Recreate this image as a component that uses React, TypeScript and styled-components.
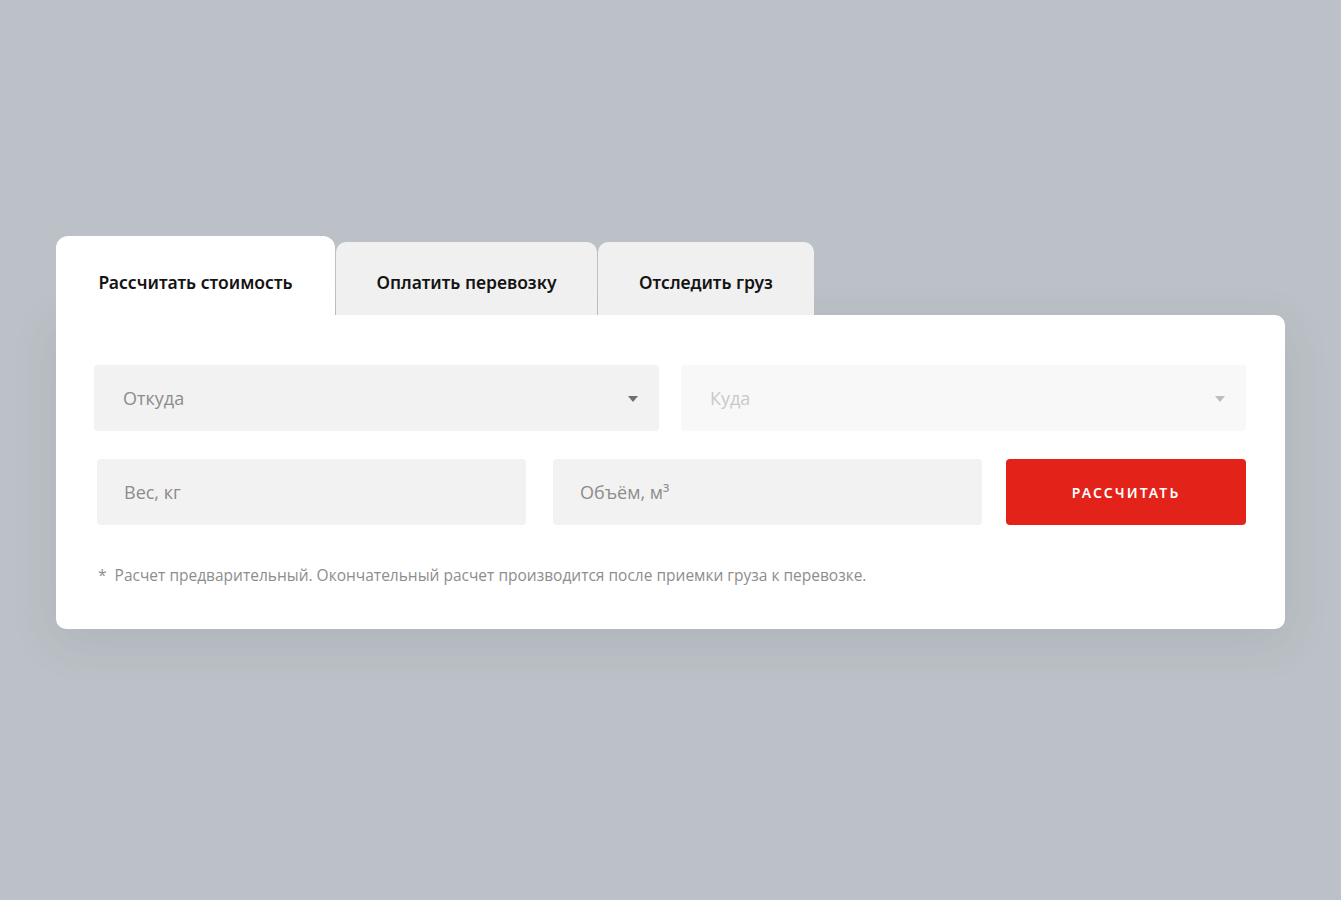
import React, { useState } from 'react';
import styled, { createGlobalStyle } from 'styled-components';

const GlobalStyle = createGlobalStyle`
  html, body {
    margin: 0;
    padding: 0;
    background: #bbc1c6;
  }
  body {
    font-family: "Open Sans", "Noto Sans", sans-serif;
  }
`;

const Page = styled.div`
  min-height: 900px;
  padding: 236px 56px 0 56px;
  box-sizing: border-box;
`;

const Widget = styled.div`
  width: 1229px;
`;

const Tabs = styled.div`
  display: flex;
  align-items: flex-end;
  gap: 1px;
`;

const Tab = styled.button<{ $active?: boolean; $w: number }>`
  border: none;
  margin: 0;
  cursor: pointer;
  font-family: "Noto Sans", "Open Sans", sans-serif;
  font-size: 17.5px;
  font-weight: 600;
  line-height: 20px;
  color: #141414;
  background: ${p => (p.$active ? '#ffffff' : '#f0f0f0')};
  border-radius: ${p => (p.$active ? '12px 12px 0 0' : '10px 10px 0 0')};
  padding: ${p => (p.$active ? '36px 0 23px 0' : '30px 0 23px 0')};
  width: ${p => p.$w}px;
  text-align: center;
`;

const Card = styled.div`
  background: #ffffff;
  border-radius: 0 10px 10px 10px;
  padding: 50px 39px 44px 38px;
  box-shadow: 0 12px 48px rgba(60, 70, 80, 0.1);
`;

const RowTop = styled.div`
  display: grid;
  grid-template-columns: 1fr 1fr;
  gap: 22px;
`;

const RowBottom = styled.div`
  display: flex;
  margin: 28px 0 0 3px;
`;

const Select = styled.div<{ $disabled?: boolean }>`
  height: 66px;
  border-radius: 4px;
  background: ${p => (p.$disabled ? '#f8f8f8' : '#f2f2f2')};
  display: flex;
  align-items: center;
  justify-content: space-between;
  padding: 0 21px 0 29px;
  font-size: 18px;
  color: ${p => (p.$disabled ? '#c9c9c9' : '#8c8c8c')};
`;

const Arrow = styled.span<{ $disabled?: boolean }>`
  width: 0;
  height: 0;
  border-left: 5px solid transparent;
  border-right: 5px solid transparent;
  border-top: 6px solid ${p => (p.$disabled ? '#bdbdbd' : '#707070')};
  margin-top: 1px;
`;

const Field = styled.input`
  height: 66px;
  width: 429px;
  flex-shrink: 0;
  border: none;
  outline: none;
  border-radius: 4px;
  background: #f2f2f2;
  padding: 0 27px;
  box-sizing: border-box;
  font-family: "Open Sans", sans-serif;
  font-size: 18px;
  color: #333;
  &:first-child {
    margin-right: 27px;
  }
  &::placeholder {
    color: #8c8c8c;
  }
`;

const Submit = styled.button`
  height: 66px;
  width: 240px;
  flex-shrink: 0;
  margin-left: auto;
  border: none;
  border-radius: 4px;
  background: #e3221a;
  color: #ffffff;
  font-family: "Noto Sans", sans-serif;
  font-size: 14px;
  font-weight: 600;
  letter-spacing: 2.1px;
  cursor: pointer;
`;

const Note = styled.p`
  margin: 40px 0 0 4px;
  font-size: 15.5px;
  line-height: 20px;
  color: #8d8d8d;
`;

const tabs = [
  { label: 'Рассчитать стоимость', w: 279 },
  { label: 'Оплатить перевозку', w: 261 },
  { label: 'Отследить груз', w: 216 },
];

export default function App() {
  const [active, setActive] = useState(0);
  return (
    <>
      <GlobalStyle />
      <Page>
        <Widget>
          <Tabs>
            {tabs.map((t, i) => (
              <Tab key={t.label} $active={i === active} $w={t.w} onClick={() => setActive(i)}>
                {t.label}
              </Tab>
            ))}
          </Tabs>
          <Card>
            <RowTop>
              <Select>
                Откуда
                <Arrow />
              </Select>
              <Select $disabled>
                Куда
                <Arrow $disabled />
              </Select>
            </RowTop>
            <RowBottom>
              <Field placeholder="Вес, кг" />
              <Field placeholder="Объём, м³" />
              <Submit>РАССЧИТАТЬ</Submit>
            </RowBottom>
            <Note>*&nbsp;&nbsp;Расчет предварительный. Окончательный расчет производится после приемки груза к перевозке.</Note>
          </Card>
        </Widget>
      </Page>
    </>
  );
}
